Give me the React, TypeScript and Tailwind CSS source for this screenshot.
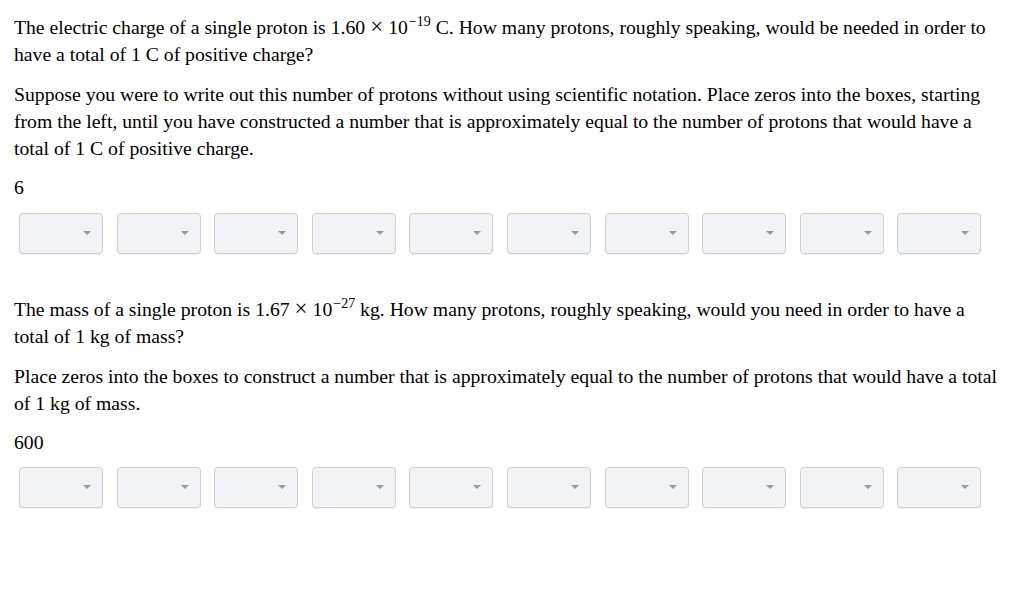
import React from "react";

function Box() {
  return (
    <div className="relative h-[41px] w-[84px] shrink-0 rounded-[4px] border border-[#cfcfd2] bg-[#f2f3f6] shadow-[0_1px_1px_rgba(0,0,0,0.06)]">
      <span className="absolute right-[11px] top-[17px] h-0 w-0 border-x-[4px] border-t-[4px] border-x-transparent border-t-[#9a9a9a]" />
    </div>
  );
}

function Boxes() {
  return (
    <div className="ml-[5px] flex gap-[13.6px]">
      {Array.from({ length: 10 }).map((_, i) => (
        <Box key={i} />
      ))}
    </div>
  );
}

function Sup({ children }: { children: React.ReactNode }) {
  return <sup className="relative top-[0px] ml-[1px] text-[14px] leading-none align-super">{children}</sup>;
}

function Times() {
  return <span className="mx-[5px] inline-block text-[23px] leading-none">×</span>;
}

export default function App() {
  return (
    <div
      className="min-h-[595px] bg-white pl-[14px] pt-[14px] text-[19.7px] leading-[27px] text-black"
      style={{ fontFamily: '"Liberation Serif", "Times New Roman", serif' }}
    >
      <p>
        The electric charge of a single proton is 1.60<Times />10<Sup>−19</Sup> C. How many protons, roughly
        speaking, would be needed in order to
        <br />
        have a total of 1 C of positive charge?
      </p>
      <p className="mt-[13px]">
        Suppose you were to write out this number of protons without using scientific notation. Place zeros
        into the boxes, starting
        <br />
        from the left, until you have constructed a number that is approximately equal to the number of protons
        that would have a
        <br />
        total of 1 C of positive charge.
      </p>
      <p className="mt-[12px]">6</p>
      <div className="mt-[12px]">
        <Boxes />
      </div>
      <p className="mt-[42px]">
        The mass of a single proton is 1.67<Times />10<Sup>−27</Sup> kg. How many protons, roughly speaking, would
        you need in order to have a
        <br />
        total of 1 kg of mass?
      </p>
      <p className="mt-[13px]">
        Place zeros into the boxes to construct a number that is approximately equal to the number of protons
        that would have a total
        <br />
        of 1 kg of mass.
      </p>
      <p className="mt-[12px]">600</p>
      <div className="mt-[11px]">
        <Boxes />
      </div>
    </div>
  );
}
